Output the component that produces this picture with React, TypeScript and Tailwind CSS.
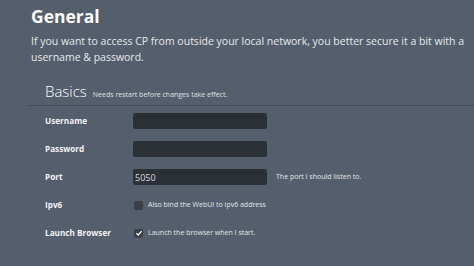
import React, { useState } from 'react';

const font = "font-['Open_Sans','Liberation_Sans',sans-serif]";

function TextRow({ label, value, hint }: { label: string; value?: string; hint?: string }) {
  return (
    <div className="flex h-[28px] items-center">
      <span className="w-[88px] text-[8.2px] font-bold text-[#f2f3f4]">{label}</span>
      <input
        defaultValue={value}
        className="h-[16px] w-[134px] rounded-[2px] bg-[#2c3037] pl-[2px] text-[9px] text-[#d7d9dc] outline-none"
      />
      {hint && <span className="ml-[9px] text-[7px] text-[#e3e5e8]">{hint}</span>}
    </div>
  );
}

function CheckRow({ label, text, checked }: { label: string; text: string; checked?: boolean }) {
  const [on, setOn] = useState(!!checked);
  return (
    <div className="flex h-[28px] items-center">
      <span className="w-[89px] text-[8.2px] font-bold text-[#f2f3f4]">{label}</span>
      <button
        onClick={() => setOn(!on)}
        className="flex h-[9px] w-[9px] items-center justify-center rounded-[2px] bg-[#3a3f48]"
      >
        {on && (
          <svg viewBox="0 0 10 10" className="h-[8px] w-[8px]">
            <path d="M1.8 5.4 L4 7.5 L8.3 2.6" fill="none" stroke="#ffffff" strokeWidth="1.6" />
          </svg>
        )}
      </button>
      <span className="ml-[5px] text-[7px] text-[#e3e5e8]">{text}</span>
    </div>
  );
}

export default function App() {
  return (
    <div className={`${font} min-h-screen overflow-hidden bg-[#545e6c] pt-[4px]`}>
      {/* Page header */}
      <div className="pl-[31px]">
        <h1 className="text-[17.5px] font-bold leading-[24px] text-white">General</h1>
        <p className="mt-[5px] w-[438px] text-[10.5px] leading-[16px] text-[#e6e8eb]">
          If you want to access CP from outside your local network, you better secure it a bit with a
          username &amp; password.
        </p>
      </div>

      {/* Basics section */}
      <div className="ml-[28px] mt-[16px]">
        <div className="flex items-baseline border-b border-[#464e5a] pb-[4px] pl-[17px]">
          <h2 className="text-[15px] font-light leading-[20px] text-white">Basics</h2>
          <span className="ml-[6px] text-[7px] text-[#dfe2e5]">Needs restart before changes take effect.</span>
        </div>

        <div className="pl-[17px] pt-px">
          <TextRow label="Username" />
          <TextRow label="Password" />
          <TextRow label="Port" value="5050" hint="The port I should listen to." />
          <CheckRow label="Ipv6" text="Also bind the WebUI to ipv6 address" />
          <CheckRow label="Launch Browser" text="Launch the browser when I start." checked />
        </div>
      </div>
    </div>
  );
}
